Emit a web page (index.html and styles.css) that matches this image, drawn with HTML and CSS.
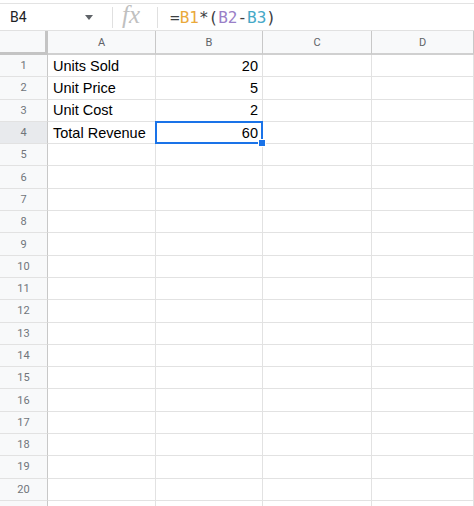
FILE: index.html
```html
<!DOCTYPE html>
<html>
<head>
<meta charset="utf-8">
<link rel="stylesheet" href="styles.css">
</head>
<body>
<div class="topline"></div>
<div class="formula-bar">
  <div class="name-box">
    <span class="name">B4</span>
    <svg class="caret" width="8" height="5" viewBox="0 0 8 5"><path d="M0 0 L8 0 L4 5 Z" fill="#5f6368"/></svg>
  </div>
  <div class="sep"></div>
  <div class="fx">fx</div>
  <div class="sep"></div>
  <div class="formula"><span>=</span><span class="r1">B1</span><span>*(</span><span class="r2">B2</span><span>-</span><span class="r3">B3</span><span>)</span></div>
</div>
<div class="sheet">
  <div class="corner"></div>
  <div class="colhead">A</div>
  <div class="colhead">B</div>
  <div class="colhead">C</div>
  <div class="colhead">D</div>

  <div class="rowhead">1</div><div class="cell">Units Sold</div><div class="cell num">20</div><div class="cell"></div><div class="cell"></div>
  <div class="rowhead">2</div><div class="cell">Unit Price</div><div class="cell num">5</div><div class="cell"></div><div class="cell"></div>
  <div class="rowhead">3</div><div class="cell">Unit Cost</div><div class="cell num">2</div><div class="cell"></div><div class="cell"></div>
  <div class="rowhead active">4</div><div class="cell">Total Revenue</div><div class="cell num selected">60<span class="handle"></span></div><div class="cell"></div><div class="cell"></div>
  <div class="rowhead">5</div><div class="cell"></div><div class="cell"></div><div class="cell"></div><div class="cell"></div>
  <div class="rowhead">6</div><div class="cell"></div><div class="cell"></div><div class="cell"></div><div class="cell"></div>
  <div class="rowhead">7</div><div class="cell"></div><div class="cell"></div><div class="cell"></div><div class="cell"></div>
  <div class="rowhead">8</div><div class="cell"></div><div class="cell"></div><div class="cell"></div><div class="cell"></div>
  <div class="rowhead">9</div><div class="cell"></div><div class="cell"></div><div class="cell"></div><div class="cell"></div>
  <div class="rowhead">10</div><div class="cell"></div><div class="cell"></div><div class="cell"></div><div class="cell"></div>
  <div class="rowhead">11</div><div class="cell"></div><div class="cell"></div><div class="cell"></div><div class="cell"></div>
  <div class="rowhead">12</div><div class="cell"></div><div class="cell"></div><div class="cell"></div><div class="cell"></div>
  <div class="rowhead">13</div><div class="cell"></div><div class="cell"></div><div class="cell"></div><div class="cell"></div>
  <div class="rowhead">14</div><div class="cell"></div><div class="cell"></div><div class="cell"></div><div class="cell"></div>
  <div class="rowhead">15</div><div class="cell"></div><div class="cell"></div><div class="cell"></div><div class="cell"></div>
  <div class="rowhead">16</div><div class="cell"></div><div class="cell"></div><div class="cell"></div><div class="cell"></div>
  <div class="rowhead">17</div><div class="cell"></div><div class="cell"></div><div class="cell"></div><div class="cell"></div>
  <div class="rowhead">18</div><div class="cell"></div><div class="cell"></div><div class="cell"></div><div class="cell"></div>
  <div class="rowhead">19</div><div class="cell"></div><div class="cell"></div><div class="cell"></div><div class="cell"></div>
  <div class="rowhead">20</div><div class="cell"></div><div class="cell"></div><div class="cell"></div><div class="cell"></div>
  <div class="rowhead"></div><div class="cell"></div><div class="cell"></div><div class="cell"></div><div class="cell"></div>
</div>
</body>
</html>
```
FILE: styles.css
```css
html, body {
  margin: 0;
  padding: 0;
  background: #ffffff;
  overflow: hidden;
}
body {
  width: 474px;
  height: 506px;
  font-family: "Liberation Sans", Arial, sans-serif;
  color: #000;
}
.topline {
  height: 3px;
  border-bottom: 1px solid #e3e3e3;
}
.formula-bar {
  height: 26px;
  display: flex;
  align-items: center;
  border-bottom: 1px solid #e1e1e1;
}
.name-box {
  width: 104px;
  padding-left: 10px;
  padding-right: 8px;
  box-sizing: border-box;
  display: flex;
  align-items: center;
  justify-content: space-between;
}
.name {
  font-family: Roboto, "Liberation Sans", sans-serif;
  font-size: 14px;
  color: #202124;
}
.caret {
  margin-top: 1px;
  margin-right: 3px;
}
.sep {
  width: 1px;
  height: 21px;
  background: #e0e0e0;
  margin-left: 8px;
}
.fx {
  width: 36px;
  text-align: center;
  font-family: "Liberation Serif", "DejaVu Serif", serif;
  font-style: italic;
  font-size: 25px;
  color: #c0c0c0;
  line-height: 24px;
  margin-top: -4px;
}
.formula {
  margin-left: 12px;
  font-family: "DejaVu Sans Mono", "Liberation Mono", monospace;
  font-size: 16px;
  color: #3c4043;
}
.r1 { color: #eaa93b; }
.r2 { color: #9a80c7; }
.r3 { color: #45a8c7; }

.sheet {
  display: grid;
  grid-template-columns: 48px 108px 107px 109px 102px;
  grid-template-rows: 24px repeat(21, 22.3px);
  height: 475px;
  overflow: hidden;
}
.corner {
  background: #f8f9fa;
  border-right: 3px solid #c4c4c4;
  border-bottom: 3px solid #c4c4c4;
  box-sizing: border-box;
}
.colhead {
  background: #f8f9fa;
  border-right: 1px solid #c8c8c8;
  border-bottom: 2px solid #d0d0d0;
  box-sizing: border-box;
  display: flex;
  align-items: center;
  justify-content: center;
  font-family: Roboto, "Liberation Sans", sans-serif;
  font-size: 11px;
  color: #5f6368;
  padding-top: 1px;
}
.rowhead {
  background: #f8f9fa;
  border-right: 1px solid #c8c8c8;
  border-bottom: 1px solid #e2e2e2;
  box-sizing: border-box;
  display: flex;
  align-items: center;
  justify-content: center;
  font-family: Roboto, "Liberation Sans", sans-serif;
  font-size: 11px;
  color: #70757a;
}
.rowhead.active {
  background: #e8eaed;
}
.cell {
  border-right: 1px solid #e2e2e2;
  border-bottom: 1px solid #e2e2e2;
  box-sizing: border-box;
  display: flex;
  align-items: center;
  padding-left: 5px;
  padding-right: 4px;
  font-size: 14.5px;
  white-space: nowrap;
  position: relative;
}
.cell.num {
  justify-content: flex-end;
}
.selected::after {
  content: "";
  position: absolute;
  left: -1px;
  top: -1px;
  right: -1px;
  bottom: -1px;
  border: 2px solid #1a73e8;
  pointer-events: none;
}
.handle {
  position: absolute;
  right: -4px;
  bottom: -4px;
  width: 6px;
  height: 6px;
  background: #1a73e8;
  border: 1px solid #ffffff;
  z-index: 2;
}
```
